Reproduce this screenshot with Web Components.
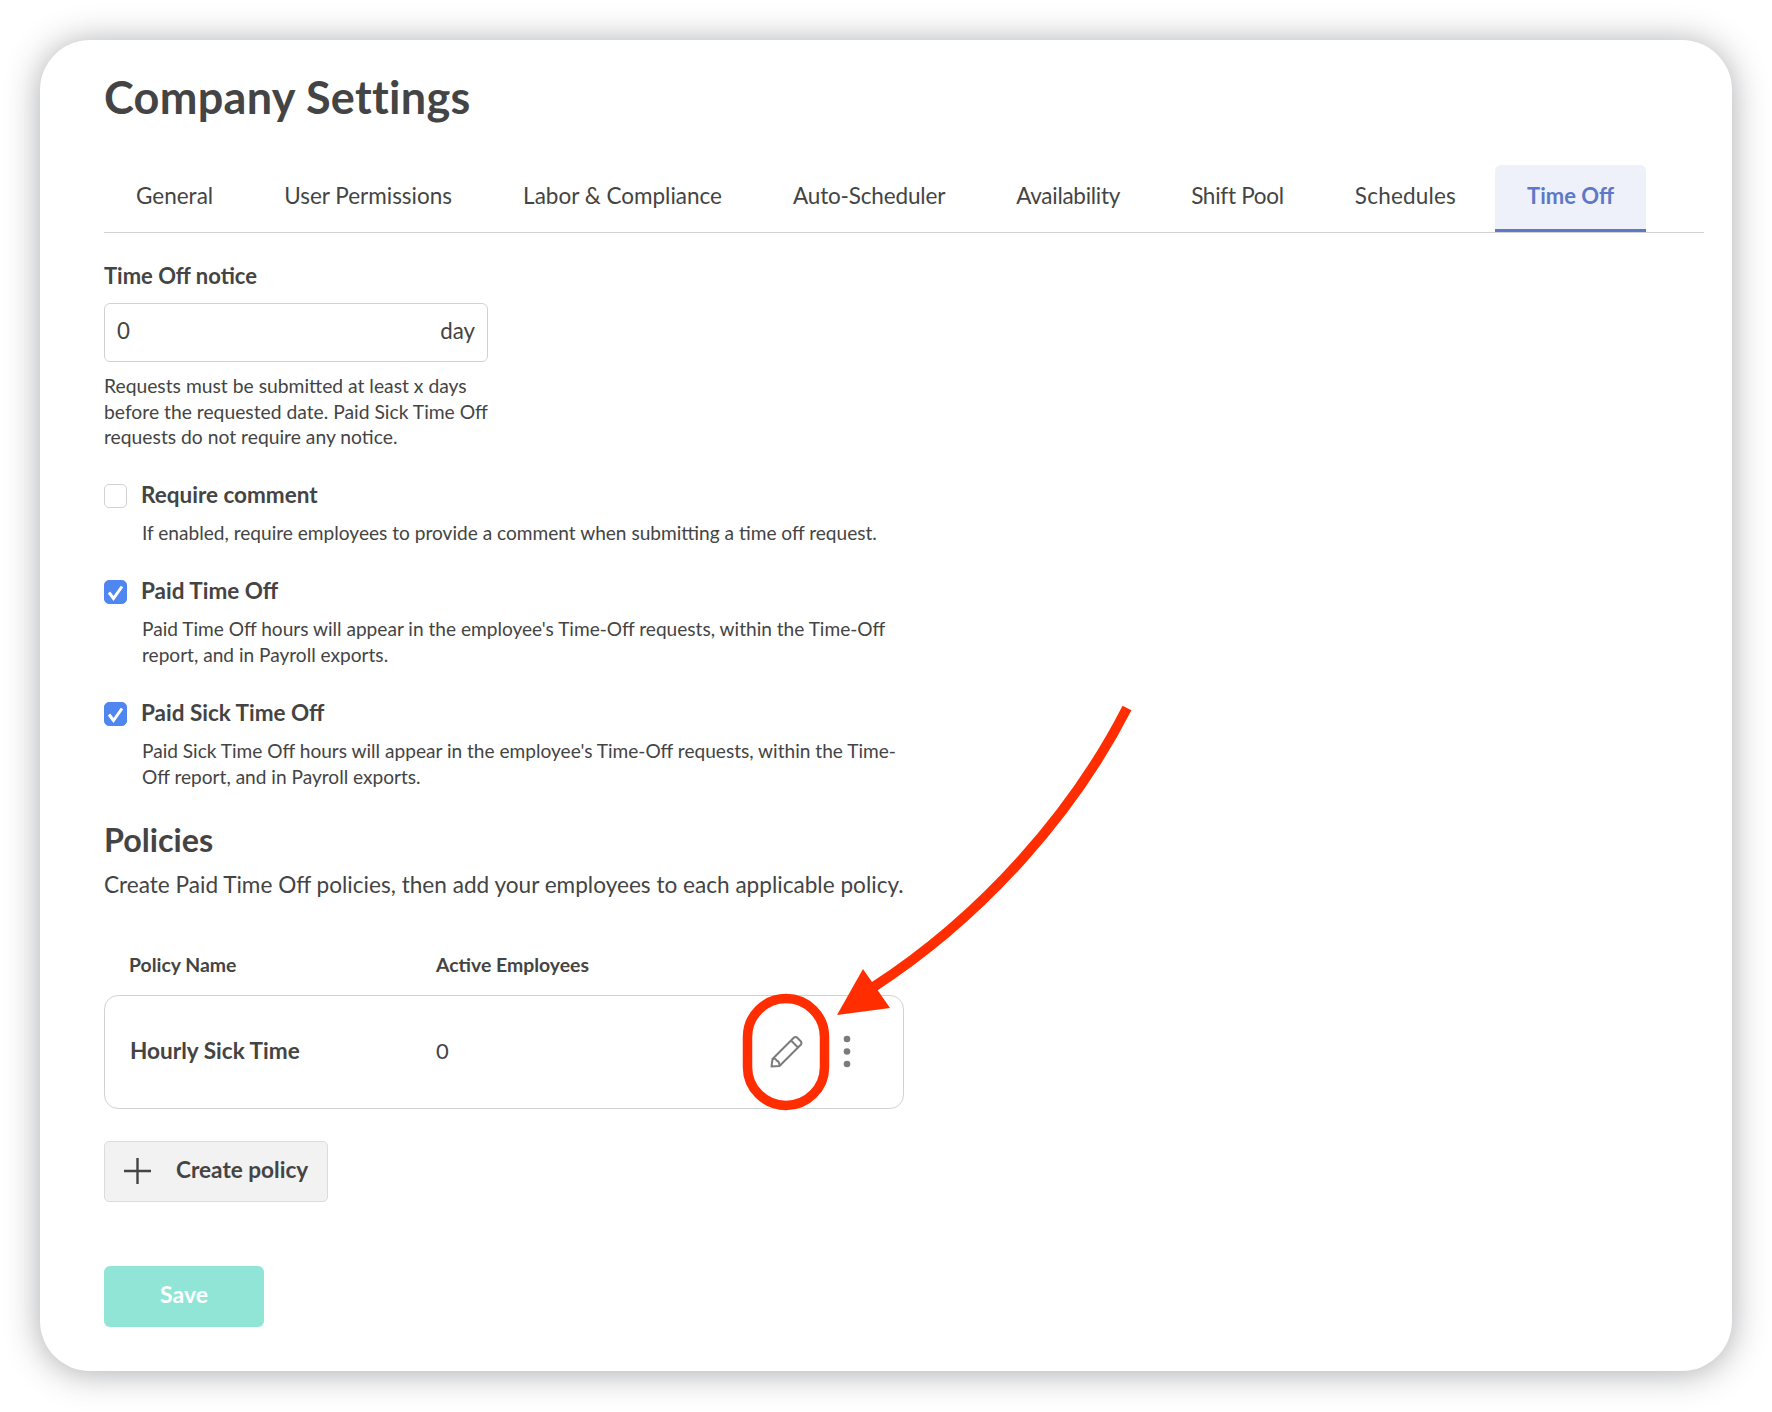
<!DOCTYPE html>
<html>
<head>
<meta charset="utf-8">
<title>Company Settings</title>
<style>
  html, body { margin: 0; background: #fff; }
  body { font-family: Lato, "Liberation Sans", sans-serif; color: #444; }
</style>
</head>
<body>
<settings-page>
  <h-title slot="title">Company Settings</h-title>
  <settings-tabs slot="tabs">
    <settings-tab>General</settings-tab>
    <settings-tab>User Permissions</settings-tab>
    <settings-tab>Labor &amp; Compliance</settings-tab>
    <settings-tab style="letter-spacing:-.16px">Auto-Scheduler</settings-tab>
    <settings-tab style="letter-spacing:-.27px">Availability</settings-tab>
    <settings-tab style="letter-spacing:-.27px">Shift Pool</settings-tab>
    <settings-tab style="letter-spacing:.2px">Schedules</settings-tab>
    <settings-tab active>Time Off</settings-tab>
  </settings-tabs>

  <notice-field label="Time Off notice" value="0" unit="day">
    Requests must be submitted at least x days<br>before the requested date. Paid Sick Time Off<br>requests do not require any notice.
  </notice-field>

  <check-field label="Require comment">If enabled, require employees to provide a comment when submitting a time off request.</check-field>
  <check-field label="Paid Time Off" checked>Paid Time Off hours will appear in the employee's Time-Off requests, within the Time-Off<br>report, and in Payroll exports.</check-field>
  <check-field label="Paid Sick Time Off" checked>Paid Sick Time Off hours will appear in the employee's Time-Off requests, within the Time-<br>Off report, and in Payroll exports.</check-field>

  <policy-table>
    <policy-row name="Hourly Sick Time" active="0"></policy-row>
  </policy-table>

  <add-button>Create policy</add-button>
  <save-button>Save</save-button>
</settings-page>

<script>
class SettingsPage extends HTMLElement {
    constructor() {
        super();
        this.attachShadow({mode: "open"});
        this.shadowRoot.innerHTML = `
        <style>
            :host { display: block; position: relative; padding: 40px; width: 1692px; height: 1331px; }
            .card {
                box-sizing: border-box;
                height: 100%;
                padding: 31px 28px 44px 64px;
                background: #fff;
                border-radius: 50px;
                box-shadow: 0 2px 34px rgba(50, 52, 60, .42);
            }
            .tabs { display: block; margin-top: 42px; }
            svg { position: absolute; left: 0; top: 0; pointer-events: none; }
        </style>
        <div class="card">
            <slot name="title"></slot>
            <div class="tabs"><slot name="tabs"></slot></div>
            <slot></slot>
        </div>
        <svg width="1772" height="1412" viewBox="0 0 1772 1412" fill="none">
            <rect x="747.5" y="998.5" width="77" height="107" rx="38.5" stroke="#ff2d00" stroke-width="9.5"/>
            <path d="M1127 708C1075 810 985 915 872 988" stroke="#ff2d00" stroke-width="10"/>
            <path d="M837 1015L863 969L890 1008Z" fill="#ff2d00"/>
        </svg>`;
    }
}

class HTitle extends HTMLElement {
    constructor() {
        super();
        this.attachShadow({mode: "open"});
        this.shadowRoot.innerHTML = `
        <style>
            :host { display: block; font-size: 45px; line-height: 52px; letter-spacing: .3px; font-weight: 700; color: #444; }
        </style>
        <slot></slot>`;
    }
}

class SettingsTabs extends HTMLElement {
    constructor() {
        super();
        this.attachShadow({mode: "open"});
        this.shadowRoot.innerHTML = `
        <style>
            :host { display: flex; gap: 7px; border-bottom: 1px solid #d2d2d2; }
        </style>
        <slot></slot>`;
    }
}

class SettingsTab extends HTMLElement {
    constructor() {
        super();
        this.attachShadow({mode: "open"});
        this.shadowRoot.innerHTML = `
        <style>
            :host {
                display: flex;
                align-items: center;
                box-sizing: border-box;
                height: 67px;
                padding: 0 32px 4px;
                font-size: 22.5px;
                color: #444;
                border-radius: 6px 6px 0 0;
                border-bottom: 3px solid transparent;
            }
            :host([active]) {
                background: #eff1fa;
                border-bottom-color: #5d78c6;
                color: #5d78c6;
                font-size: 22px;
                font-weight: 700;
            }
        </style>
        <slot></slot>`;
    }
}

class NoticeField extends HTMLElement {
    constructor() {
        super();
        this.attachShadow({mode: "open"});
        this.shadowRoot.innerHTML = `
        <style>
            :host { display: block; margin-top: 29px; }
            .label { font-size: 22px; line-height: 28px; font-weight: 700; }
            .input {
                box-sizing: border-box;
                display: flex;
                justify-content: space-between;
                align-items: center;
                width: 384px;
                height: 59px;
                margin-top: 13px;
                padding: 0 12px 4px;
                border: 1px solid #d2d2d2;
                border-radius: 6px;
                font-size: 22.3px;
            }
            .help { margin: 11px 0 1px; font-size: 19.3px; line-height: 25.5px; }
        </style>
        <div class="label">${this.getAttribute("label")}</div>
        <div class="input"><span>${this.getAttribute("value")}</span><span>${this.getAttribute("unit")}</span></div>
        <div class="help"><slot></slot></div>`;
    }
}

class CheckField extends HTMLElement {
    constructor() {
        super();
        this.attachShadow({mode: "open"});
        const marcado = this.hasAttribute("checked");
        this.shadowRoot.innerHTML = `
        <style>
            :host {
                display: grid;
                grid-template-columns: 23px 1fr;
                column-gap: 14px;
                margin-top: 30px;
            }
            .box {
                box-sizing: border-box;
                width: 23px;
                height: 24px;
                margin-top: 4px;
                border: 1px solid #d2d2d2;
                border-radius: 5px;
                background: #fff;
            }
            .box.on { background: #4f86f0; border-color: #4f86f0; }
            .box svg { display: block; }
            .label { margin-top: 1px; font-size: 22.5px; line-height: 28px; font-weight: 700; }
            .desc { grid-column: 2; margin: 11px 0 0 1px; font-size: 19.1px; line-height: 26px; }
        </style>
        <div class="box ${marcado ? "on" : ""}">
            ${marcado ? `<svg width="21" height="22" viewBox="0 0 21 22" fill="none"><path d="M4 11.5L8.5 17.5L17 5.5" stroke="#fff" stroke-width="3"/></svg>` : ""}
        </div>
        <div class="label">${this.getAttribute("label")}</div>
        <div class="desc"><slot></slot></div>`;
    }
}

class PolicyTable extends HTMLElement {
    constructor() {
        super();
        this.attachShadow({mode: "open"});
        this.shadowRoot.innerHTML = `
        <style>
            :host { display: block; width: 800px; margin-top: 30px; }
            h2 { margin: 0; font-size: 32.3px; line-height: 40px; font-weight: 700; }
            p { margin: 11px 0 0; font-size: 22.6px; line-height: 28px; white-space: nowrap; }
            .head {
                display: grid;
                grid-template-columns: 307px 1fr;
                margin-top: 54px;
                padding-left: 25px;
                font-size: 19.4px;
                line-height: 24px;
                font-weight: 700;
            }
            .rows { margin-top: 18px; }
        </style>
        <h2>Policies</h2>
        <p>Create Paid Time Off policies, then add your employees to each applicable policy.</p>
        <div class="head"><span>Policy Name</span><span>Active Employees</span></div>
        <div class="rows"><slot></slot></div>`;
    }
}

class PolicyRow extends HTMLElement {
    constructor() {
        super();
        this.attachShadow({mode: "open"});
        this.shadowRoot.innerHTML = `
        <style>
            :host {
                box-sizing: border-box;
                display: grid;
                grid-template-columns: 306px 334px 32px 1fr;
                align-items: center;
                height: 114px;
                padding-left: 25px;
                border: 1px solid #d2d2d2;
                border-radius: 14px;
                font-size: 22px;
            }
            .name { font-weight: 700; font-size: 22.6px; }
            .name, .count { padding-bottom: 3px; }
            svg { display: block; }
            .dots { margin-left: 41px; }
        </style>
        <span class="name">${this.getAttribute("name")}</span>
        <span class="count">${this.getAttribute("active")}</span>
        <svg width="33" height="33" viewBox="0 0 33 33" fill="none" stroke="#7b7b7b" stroke-width="2" stroke-linejoin="round">
            <path d="M1.5 31.5L2.5 24L23.5 3Q25.5 1 27.5 3L30.5 6Q32.5 8 30.5 10L9.5 31Z"/>
            <path d="M21 5.5L28 12.5"/>
            <path d="M2.5 24Q6 23 6.5 25.5Q9.5 26.5 9.5 31"/>
        </svg>
        <svg class="dots" width="8" height="33" viewBox="0 0 8 33" fill="#7b7b7b">
            <circle cx="4" cy="4" r="3.3"/><circle cx="4" cy="16.5" r="3.3"/><circle cx="4" cy="29" r="3.3"/>
        </svg>`;
    }
}

class AddButton extends HTMLElement {
    constructor() {
        super();
        this.attachShadow({mode: "open"});
        this.shadowRoot.innerHTML = `
        <style>
            :host {
                box-sizing: border-box;
                display: flex;
                align-items: center;
                gap: 25px;
                width: 224px;
                height: 61px;
                margin-top: 32px;
                padding-left: 19px;
                background: #f2f2f2;
                border: 1px solid #dcdcdc;
                border-radius: 5px;
                font-size: 22.6px;
                font-weight: 700;
            }
            svg { display: block; flex: none; }
            span { padding-bottom: 4px; }
        </style>
        <svg width="27" height="26" viewBox="0 0 27 26" stroke="#444" stroke-width="2.4"><path d="M0 13H27M13.5 0V26"/></svg>
        <span><slot></slot></span>`;
    }
}

class SaveButton extends HTMLElement {
    constructor() {
        super();
        this.attachShadow({mode: "open"});
        this.shadowRoot.innerHTML = `
        <style>
            :host {
                box-sizing: border-box;
                display: flex;
                align-items: center;
                justify-content: center;
                width: 160px;
                height: 61px;
                margin-top: 64px;
                padding-bottom: 5px;
                background: #90e5d7;
                border-radius: 6px;
                color: #fff;
                font-size: 23px;
                font-weight: 700;
            }
        </style>
        <slot></slot>`;
    }
}

customElements.define("settings-page", SettingsPage);
customElements.define("h-title", HTitle);
customElements.define("settings-tabs", SettingsTabs);
customElements.define("settings-tab", SettingsTab);
customElements.define("notice-field", NoticeField);
customElements.define("check-field", CheckField);
customElements.define("policy-table", PolicyTable);
customElements.define("policy-row", PolicyRow);
customElements.define("add-button", AddButton);
customElements.define("save-button", SaveButton);
</script>
</body>
</html>
